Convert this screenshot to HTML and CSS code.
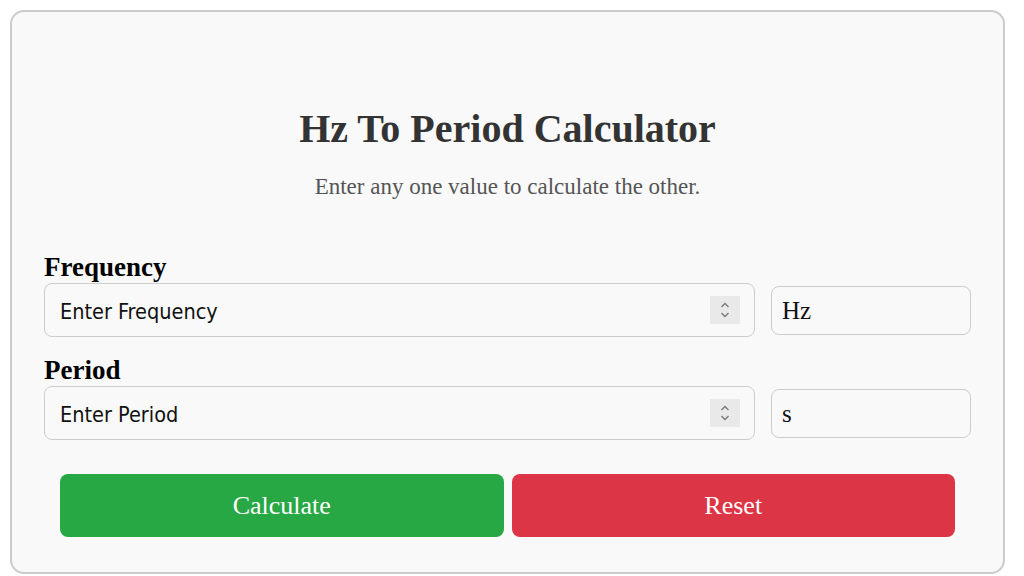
FILE: index.html
```html
<!DOCTYPE html>
<html lang="en">
<head>
    <meta charset="UTF-8">
    <meta name="viewport" content="width=device-width, initial-scale=1.0">
    <title>Hz To Period Calculator</title>
    <link rel="stylesheet" href="styles.css">
</head>
<body>
    <div class="calculator">
        <h1>Hz To Period Calculator</h1>
        <p class="subtitle">Enter any one value to calculate the other.</p>

        <label class="label" for="frequency">Frequency</label>
        <div class="row">
            <div class="field">
                <input type="text" id="frequency" placeholder="Enter Frequency">
                <span class="spin">
                    <svg width="14" height="20" viewBox="0 0 14 20"><path d="M3.5 7 L7 3.5 L10.5 7" /><path d="M3.5 13 L7 16.5 L10.5 13" /></svg>
                </span>
            </div>
            <select class="unit">
                <option>Hz</option>
            </select>
        </div>

        <label class="label" for="period">Period</label>
        <div class="row">
            <div class="field">
                <input type="text" id="period" placeholder="Enter Period">
                <span class="spin">
                    <svg width="14" height="20" viewBox="0 0 14 20"><path d="M3.5 7 L7 3.5 L10.5 7" /><path d="M3.5 13 L7 16.5 L10.5 13" /></svg>
                </span>
            </div>
            <select class="unit">
                <option>s</option>
            </select>
        </div>

        <div class="buttons">
            <button class="btn calc">Calculate</button>
            <button class="btn reset">Reset</button>
        </div>
    </div>
</body>
</html>
```
FILE: styles.css
```css
/* 页面整体 */
html, body {
    margin: 0;
    background: #fff;
}

body {
    padding: 10px;
    font-family: "Liberation Serif", "Times New Roman", serif;
}

.calculator {
    box-sizing: border-box;
    width: 995px;
    height: 564px;
    padding: 94px 32px 0;
    background-color: #f9f9f9;
    border: 2px solid #ccc;
    border-radius: 14px;
}

h1 {
    margin: 0;
    font-size: 40px;
    line-height: 46px;
    font-weight: bold;
    color: #333;
    text-align: center;
}

.subtitle {
    margin: 22px 0 0;
    font-size: 23px;
    line-height: 26px;
    color: #555;
    text-align: center;
}

.label {
    display: block;
    margin-top: 52px;
    font-size: 27px;
    line-height: 30px;
    font-weight: bold;
    color: #000;
}

.row + .label {
    margin-top: 18px;
}

.row {
    display: flex;
    align-items: center;
    gap: 16px;
    margin-top: 1px;
}

.field {
    flex: 1;
    box-sizing: border-box;
    height: 54px;
    display: flex;
    align-items: center;
    padding: 2px 14px 0 15px;
    border: 1px solid #ccc;
    border-radius: 8px;
    background-color: #f9f9f9;
}

.field input {
    flex: 1;
    min-width: 0;
    border: none;
    outline: none;
    background: transparent;
    padding: 0;
    font-family: "DejaVu Sans Condensed", "DejaVu Sans", sans-serif;
    font-stretch: semi-condensed;
    font-size: 21.5px;
    color: #111;
}

.field input::placeholder {
    color: #111;
    opacity: 1;
}

.spin {
    width: 30px;
    height: 28px;
    margin-top: -2px;
    display: flex;
    align-items: center;
    justify-content: center;
    background-color: #e9e9e9;
}

.spin path {
    fill: none;
    stroke: #7a7a7a;
    stroke-width: 1.4;
}

.unit {
    box-sizing: border-box;
    width: 200px;
    height: 49px;
    padding: 0 10px;
    border: 1px solid #ccc;
    border-radius: 8px;
    background-color: #f9f9f9;
    font-family: "Liberation Serif", "Times New Roman", serif;
    font-size: 25px;
    color: #111;
    appearance: none;
    -webkit-appearance: none;
}

/* 按钮 */
.buttons {
    display: flex;
    gap: 8px;
    margin: 34px 16px 0;
}

.btn {
    flex: 1;
    height: 63px;
    border: none;
    border-radius: 8px;
    color: #fff;
    font-family: "Liberation Serif", "Times New Roman", serif;
    font-size: 26px;
    cursor: pointer;
}

.calc {
    background-color: #28a745;
}

.reset {
    background-color: #dc3545;
}
```
